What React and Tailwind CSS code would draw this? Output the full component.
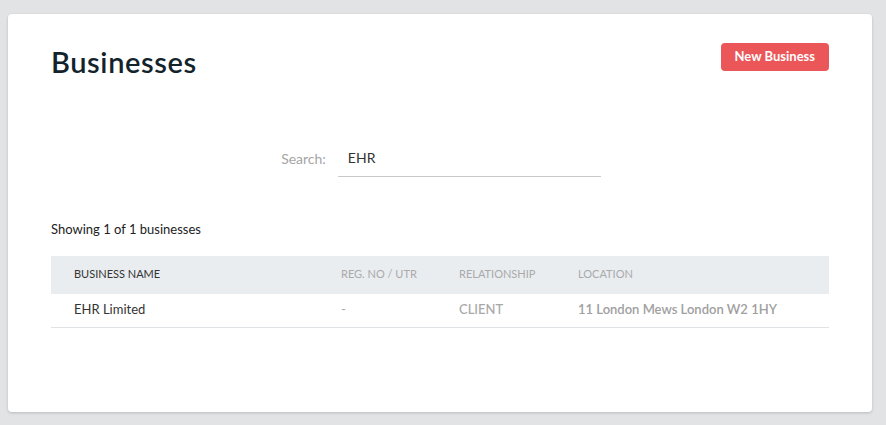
import { useState } from "react";

const rows = [
  {
    name: "EHR Limited",
    reg: "-",
    relationship: "CLIENT",
    location: "11 London Mews London W2 1HY",
  },
];

const App = () => {
  const [query, setQuery] = useState("EHR");

  return (
    <div
      className="min-h-screen bg-[#e2e3e5] pt-[14px] pr-[14px] pb-[13px] pl-[8px]"
      style={{ fontFamily: "Lato, 'Open Sans', sans-serif" }}
    >
      <div className="h-[398px] rounded-[4px] bg-white px-[43px] pt-[29px] shadow-[0_1px_3px_rgba(0,0,0,0.18)]">
        <div className="flex items-start justify-between">
          <h1 className="mt-[1px] text-[29px] leading-[36px] font-semibold tracking-[0.6px] text-[#13232b]">
            Businesses
          </h1>
          <button className="h-[28px] rounded-[4px] bg-[#eb5658] px-[14px] text-[13px] font-bold text-white">
            New Business
          </button>
        </div>

        <div className="mt-[68px] flex items-end justify-center pl-[2px]">
          <label className="mr-[12px] pb-[8px] text-[14px] leading-[20px] text-[#a5a5a5]">Search:</label>
          <div className="w-[263px] border-b border-[#c8c8c8] pb-[8px] pl-[10px]">
            <input
              value={query}
              onChange={(event) => setQuery(event.target.value)}
              className="block h-[20px] w-full text-[14px] leading-[20px] text-[#333] outline-none"
            />
          </div>
        </div>

        <p className="mt-[43px] text-[13px] text-[#222]">Showing 1 of 1 businesses</p>

        <div className="mt-[16px]">
          <div className="grid h-[38px] grid-cols-[290px_118px_119px_1fr] items-center bg-[#e9edf0] text-[11px] uppercase">
            <span className="pl-[23px] text-[#333]">Business Name</span>
            <span className="text-[#aaa]">Reg. No / UTR</span>
            <span className="text-[#aaa]">Relationship</span>
            <span className="text-[#aaa]">Location</span>
          </div>
          {rows.map((row) => (
            <div
              key={row.name}
              className="grid h-[34px] grid-cols-[290px_118px_119px_1fr] items-center border-b border-[#e0e3e6] text-[13px]"
            >
              <span className="pl-[23px] text-[#333]">{row.name}</span>
              <span className="text-[#aaa]">{row.reg}</span>
              <span className="font-medium text-[#a8a8a8]">{row.relationship}</span>
              <span className="font-semibold text-[#a0a0a0]">{row.location}</span>
            </div>
          ))}
        </div>
      </div>
    </div>
  );
};

export default App;
